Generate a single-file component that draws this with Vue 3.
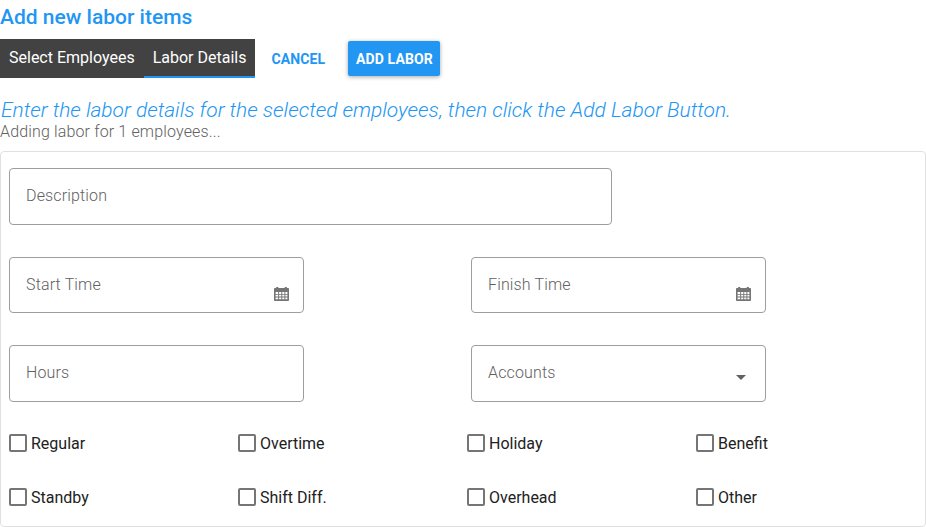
<template>
  <div class="page">
    <h1 class="title">Add new labor items</h1>

    <div class="toolbar">
      <div class="tabs">
        <div class="tab">Select Employees</div>
        <div class="tab active">Labor Details</div>
      </div>
      <button class="btn-text">CANCEL</button>
      <button class="btn-primary">ADD LABOR</button>
    </div>

    <div class="hint">Enter the labor details for the selected employees, then click the Add Labor Button.</div>
    <div class="sub-hint">Adding labor for {{ employeeCount }} employees...</div>

    <div class="card">
      <div class="field field-wide">
        <span class="field-label up">Description</span>
      </div>

      <div class="field-row">
        <div class="field field-small" v-for="f in timeFields" :key="f">
          <span class="field-label">{{ f }}</span>
          <svg class="cal-icon" viewBox="1 1 14 14" width="15" height="14" preserveAspectRatio="none">
            <path fill="#757575" fill-rule="evenodd" d="M3 1h2v1h6V1h2v1h1.2c.5 0 .8.4.8.8v11.4c0 .5-.4.8-.8.8H1.800c-.5 0-.8-.4-.8-.8V2.800c0-.5.4-.8.8-.8H3V1zM2.500 6v1.900h2.400V6H2.500zm3.300 0v1.900h2V6h-2zm2.900 0v1.900h2V6h-2zm2.900 0v1.900h1.900V6h-1.900zM2.500 8.700v1.900h2.400V8.700H2.500zm3.300 0v1.900h2V8.700h-2zm2.900 0v1.900h2V8.700h-2zm2.900 0v1.900h1.900V8.700h-1.900zM2.500 11.400v1.900h2.400v-1.900H2.500zm3.300 0v1.900h2v-1.900h-2zm2.900 0v1.900h2v-1.900h-2zm2.900 0v1.900h1.900v-1.900h-1.900z"/>
          </svg>
        </div>
      </div>

      <div class="field-row">
        <div class="field field-small tall">
          <span class="field-label up">Hours</span>
        </div>
        <div class="field field-small tall">
          <span class="field-label up">Accounts</span>
          <span class="caret"></span>
        </div>
      </div>

      <div class="checks">
        <label class="check" v-for="c in checks" :key="c">
          <span class="box"></span>
          <span class="check-label">{{ c }}</span>
        </label>
      </div>
    </div>
  </div>
</template>

<script setup>
const employeeCount = 1
const timeFields = ['Start Time', 'Finish Time']
const checks = ['Regular', 'Overtime', 'Holiday', 'Benefit', 'Standby', 'Shift Diff.', 'Overhead', 'Other']
</script>

<style>
html, body {
  background: #fff;
}
</style>

<style scoped>
.page {
  width: 926px;
  height: 527px;
  overflow: hidden;
  font-family: Roboto, "Liberation Sans", sans-serif;
  color: #212121;
}

.title {
  margin: 0;
  height: 39px;
  padding-top: 5px;
  box-sizing: border-box;
  font-size: 21px;
  line-height: 24px;
  font-weight: 500;
  color: #2196f3;
}

.toolbar {
  display: flex;
  align-items: center;
  height: 39px;
}

.tabs {
  display: flex;
  background: #424242;
  height: 39px;
}

.tab {
  padding: 0 9px;
  font-size: 16px;
  line-height: 37px;
  color: #fff;
  box-sizing: border-box;
  border-bottom: 2px solid transparent;
}

.tab.active {
  border-bottom-color: #2196f3;
}

button {
  font-family: inherit;
  border: none;
  font-size: 14px;
  font-weight: 700;
  letter-spacing: 0.1px;
  cursor: pointer;
}

.btn-text {
  background: none;
  color: #2196f3;
  padding: 0;
  margin-left: 16px;
  width: 54px;
}

.btn-primary {
  margin-left: 23px;
  width: 92px;
  height: 35px;
  background: #2196f3;
  color: #fff;
  padding: 0;
  border-radius: 2px;
  box-shadow: 0 1px 4px rgba(0, 0, 0, 0.35);
}

.hint {
  margin-top: 20px;
  padding-left: 1px;
  font-size: 20.950px;
  line-height: 24px;
  font-style: italic;
  font-weight: 300;
  color: #2196f3;
}

.sub-hint {
  margin-top: 1px;
  font-size: 16px;
  line-height: 18px;
  font-weight: 300;
  letter-spacing: 0.15px;
  color: #616161;
}

.card {
  margin-top: 10px;
  box-sizing: border-box;
  height: 376px;
  border: 1px solid #e0e0e0;
  border-radius: 4px;
  padding: 16px 8px 0;
}

.field {
  position: relative;
  box-sizing: border-box;
  border: 1px solid #9e9e9e;
  border-radius: 4px;
  display: flex;
  align-items: center;
  padding: 0 16px;
}

.field-wide {
  width: 603px;
  height: 57px;
}

.field-small {
  width: 295px;
  height: 56px;
}

.field-small.tall {
  height: 57px;
}

.field-label {
  font-size: 16px;
  font-weight: 300;
  letter-spacing: 0.15px;
  color: #616161;
  margin-top: -1px;
}

.field-label.up {
  margin-top: -3px;
}

.field-row {
  display: flex;
  gap: 167px;
  margin-top: 32px;
}

.cal-icon {
  position: absolute;
  right: 14px;
  bottom: 11px;
}

.caret {
  position: absolute;
  right: 19px;
  top: 29px;
  width: 0;
  height: 0;
  border-left: 5px solid transparent;
  border-right: 5px solid transparent;
  border-top: 5px solid #616161;
}

.checks {
  display: grid;
  grid-template-columns: repeat(4, 229px);
  grid-auto-rows: 54px;
  margin-top: 14px;
}

.check {
  display: flex;
  align-items: center;
  gap: 4px;
  height: 54px;
}

.box {
  box-sizing: border-box;
  width: 18px;
  height: 18px;
  border: 2px solid #757575;
  border-radius: 2px;
}

.check-label {
  font-size: 16px;
  font-weight: 400;
  color: #212121;
}
</style>
